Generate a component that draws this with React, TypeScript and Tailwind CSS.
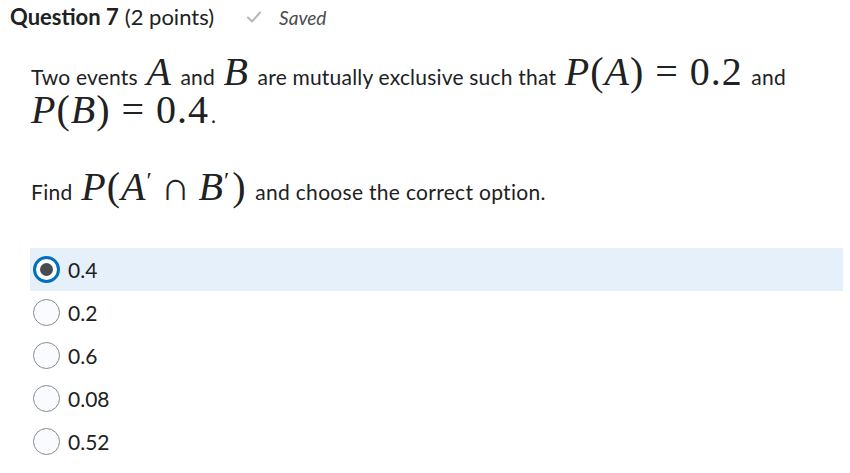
import { useState } from "react"

const options = ["0.4", "0.2", "0.6", "0.08", "0.52"]

function M({ children, italic, tight }: { children: React.ReactNode; italic?: boolean; tight?: boolean }) {
  return (
    <span
      className={`font-['Liberation_Serif',serif] text-[40px] leading-[24px] tracking-[1px] ${tight ? "mr-[2px]" : "mx-[3px]"} ${italic ? "italic" : ""}`}
    >
      {children}
    </span>
  )
}

function Eq() {
  return <span className="mx-[11px]">=</span>
}

function Radio({ checked }: { checked: boolean }) {
  if (checked) {
    return (
      <span className="flex h-[27px] w-[27px] shrink-0 items-center justify-center rounded-full border-[3px] border-[#006fbf] bg-white">
        <span className="h-[13px] w-[13px] rounded-full bg-[#494c4e]" />
      </span>
    )
  }
  return <span className="h-[27px] w-[27px] shrink-0 rounded-full border border-[#868c8f] bg-[#f9fbff]" />
}

export default function App() {
  const [picked, setPicked] = useState(0)

  return (
    <div className="min-h-screen bg-white font-['Lato',sans-serif] text-[#202122]">
      <div className="flex items-baseline pl-[10px] pt-[0px]">
        <span className="text-[22px] font-bold">Question 7</span>
        <span className="ml-[6px] text-[22px]">(2 points)</span>
        <svg className="ml-[32px] h-[16px] w-[16px] self-center" viewBox="0 0 16 16" fill="none">
          <path d="M2 8.5l4 4 8-9" stroke="#b3b7b9" strokeWidth="2" strokeLinecap="round" strokeLinejoin="round" />
        </svg>
        <span className="ml-[17px] text-[19px] italic text-[#494c4e]">Saved</span>
      </div>

      <div className="pl-[31px] pt-[25px]">
        <p className="text-[21px] leading-[38px] tracking-[0.2px]">
          Two events <M italic>A</M> and <M italic>B</M> are mutually exclusive such that{" "}
          <M><i>P</i>(<i>A</i>)<Eq />0.2</M> and
          <br />
          <M tight><i>P</i>(<i>B</i>)<Eq />0.4</M>.
        </p>
        <p className="mt-[39px] text-[21px] leading-[38px] tracking-[0.3px]">
          Find{" "}
          <M>
            <i>P</i>(<i>A</i><sup className="text-[24px]">′</sup>
            <span className="mx-[8px]">∩</span>
            <i>B</i><sup className="text-[24px]">′</sup>
            <span className="ml-[2px]">)</span>
          </M>{" "}
          and choose the correct option.
        </p>
      </div>

      <div className="ml-[30px] mr-[7px] mt-[37px] flex flex-col">
        {options.map((o, i) => (
          <label
            key={o}
            onClick={() => setPicked(i)}
            className={`flex h-[43px] cursor-pointer items-center gap-[8px] pl-[3px] text-[21px] ${picked === i ? "bg-[#e6f0fb]" : ""}`}
          >
            <Radio checked={picked === i} />
            <span>{o}</span>
          </label>
        ))}
      </div>
    </div>
  )
}
